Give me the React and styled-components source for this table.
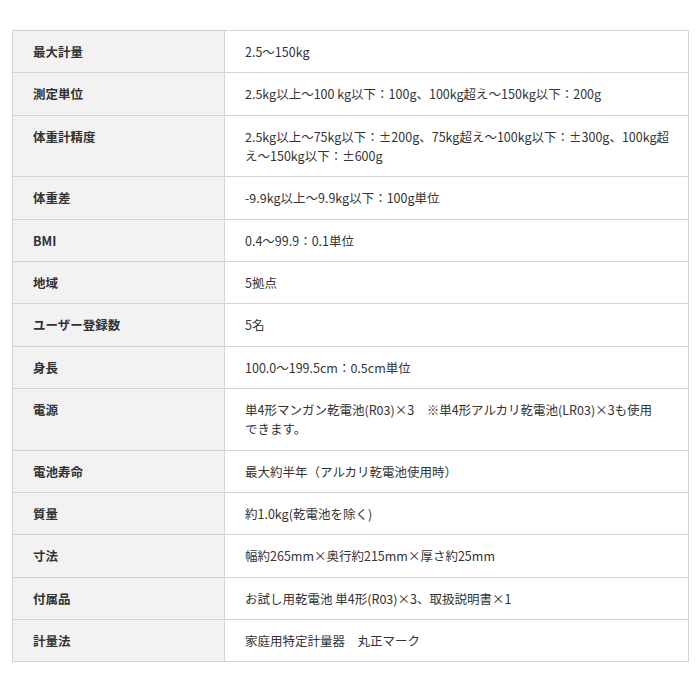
import React from "react";
import styled, { createGlobalStyle } from "styled-components";

const GlobalStyle = createGlobalStyle`
  body {
    margin: 0;
    background: #fff;
    font-family: "Noto Sans CJK JP", "Noto Sans", sans-serif;
    color: #333;
  }
`;

const Page = styled.div`
  padding: 30px 11px 0 12px;
`;

const SpecTable = styled.table`
  width: 677px;
  border-collapse: collapse;
  table-layout: fixed;
  font-size: 12.5px;
  line-height: 19.6px;
`;

const Label = styled.th`
  width: 212px;
  box-sizing: border-box;
  background: #f2f2f2;
  border: 1px solid #d4d4d4;
  padding: 11px 20px 10.7px;
  text-align: left;
  vertical-align: top;
  font-weight: 700;
  color: #333;
`;

const Value = styled.td`
  border: 1px solid #d4d4d4;
  padding: 11px 14px 10.7px 20px;
  vertical-align: top;
  color: #333;
`;

// values with more than one entry break where the original page wrapped
const specs = [
  ["最大計量", ["2.5〜150kg"]],
  ["測定単位", ["2.5kg以上〜100 kg以下：100g、100kg超え〜150kg以下：200g"]],
  [
    "体重計精度",
    [
      "2.5kg以上〜75kg以下：±200g、75kg超え〜100kg以下：±300g、100kg超",
      "え〜150kg以下：±600g",
    ],
  ],
  ["体重差", ["-9.9kg以上〜9.9kg以下：100g単位"]],
  ["BMI", ["0.4〜99.9：0.1単位"]],
  ["地域", ["5拠点"]],
  ["ユーザー登録数", ["5名"]],
  ["身長", ["100.0〜199.5cm：0.5cm単位"]],
  [
    "電源",
    [
      "単4形マンガン乾電池(R03)×3　※単4形アルカリ乾電池(LR03)×3も使用",
      "できます。",
    ],
  ],
  ["電池寿命", ["最大約半年（アルカリ乾電池使用時）"]],
  ["質量", ["約1.0kg(乾電池を除く)"]],
  ["寸法", ["幅約265mm×奥行約215mm×厚さ約25mm"]],
  ["付属品", ["お試し用乾電池 単4形(R03)×3、取扱説明書×1"]],
  ["計量法", ["家庭用特定計量器　丸正マーク"]],
];

export default function App() {
  return (
    <>
      <GlobalStyle />
      <Page>
        <SpecTable>
          <tbody>
            {specs.map(([label, lines]) => (
              <tr key={label}>
                <Label>{label}</Label>
                <Value>
                  {lines.map((line, i) => (
                    <React.Fragment key={i}>
                      {i > 0 && <br />}
                      {line}
                    </React.Fragment>
                  ))}
                </Value>
              </tr>
            ))}
          </tbody>
        </SpecTable>
      </Page>
    </>
  );
}
